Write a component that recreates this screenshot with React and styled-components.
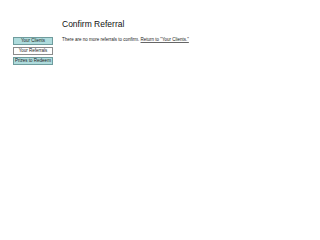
import styled, { createGlobalStyle } from "styled-components";

const GlobalStyle = createGlobalStyle`
    body {
        margin: 0;
        background: #ffffff;
        font-family: "Liberation Sans", Arial, sans-serif;
        color: #000000;
    }
`

const navItems = [
    { label: "Your Clients", active: true },
    { label: "Your Referrals", active: false },
    { label: "Prizes to Redeem", active: true },
];

const App = () => {
    return (
        <>
            <GlobalStyle />
            <Page>
                <Sidebar>
                    { navItems.map(item => <NavButton key={item.label} $active={item.active}>{item.label}</NavButton>) }
                </Sidebar>
                <Main>
                    <Title>Confirm Referral</Title>
                    <Message>
                        There are no more referrals to confirm. <a href="#">Return to "Your Clients."</a>
                    </Message>
                </Main>
            </Page>
        </>
    );
}

const Page = styled.div`
    display: flex;
    align-items: flex-start;
    width: 320px;
    height: 240px;
`

const Sidebar = styled.div`
    display: flex;
    flex-direction: column;
    gap: 2px;
    padding: 37px 0 0 13px;
    width: 53px;
    box-sizing: border-box;
`

const NavButton = styled.div`
    height: 8px;
    box-sizing: border-box;
    border: 1px solid ${p => p.$active ? "#6f9c9d" : "#8c8c8c"};
    background: ${p => p.$active ? "#aedbdc" : "#ffffff"};
    font-size: 4.5px;
    line-height: 6px;
    text-align: center;
    color: #222;
    white-space: nowrap;
`

const Main = styled.div`
    padding: 19px 0 0 9px;
`

const Title = styled.h1`
    margin: 0;
    font-weight: normal;
    font-size: 8.5px;
    line-height: 11px;
    color: #111;
`

const Message = styled.p`
    margin: 7px 0 0;
    font-size: 4.5px;
    line-height: 6px;
    color: #222;

    a {
        color: #222;
        text-decoration: underline;
        text-decoration-thickness: 0.4px;
        text-decoration-color: #666;
    }
`

export default App;
